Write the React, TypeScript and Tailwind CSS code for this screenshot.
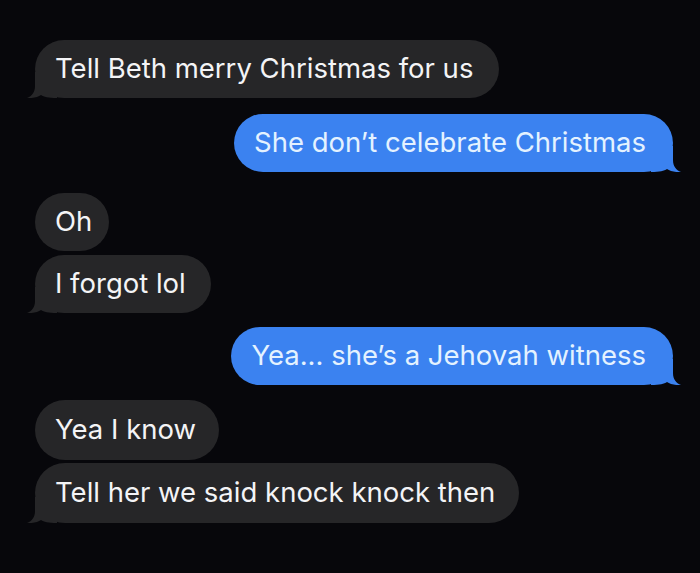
import React from "react";

const GRAY = "#262628";
const BLUE = "#3b82f0";

function Tail({ side, color }: { side: "left" | "right"; color: string }) {
  return (
    <svg
      width="30"
      height="30"
      viewBox="0 0 30 30"
      className={
        side === "left"
          ? "absolute bottom-0 left-[-8px]"
          : "absolute bottom-0 right-[-8px] -scale-x-100"
      }
    >
      <path
        d="M8 4 L8 18 C8 24 5 28 0 30 C6 30.5 11 29 14 27 C17 29 21 30 30 30 L30 4 Z"
        fill={color}
      />
    </svg>
  );
}

function Bubble({
  text,
  side,
  tail,
  className = "",
}: {
  text: string;
  side: "left" | "right";
  tail?: boolean;
  className?: string;
}) {
  const color = side === "left" ? GRAY : BLUE;
  return (
    <div
      className={`relative flex h-[58px] items-center rounded-[29px] pl-[20px] text-[27.5px] leading-none tracking-[0px] ${
        side === "left" ? "self-start text-[#f4f4f6]" : "self-end text-[#e4f2ff]"
      } ${className}`}
      style={{ backgroundColor: color }}
    >
      {tail && <Tail side={side} color={color} />}
      <span className="relative">{text}</span>
    </div>
  );
}

export default function App() {
  return (
    <div
      className="flex h-[573px] w-[700px] flex-col bg-[#07070b] pl-[35px] pr-[27px] pt-[40px]"
      style={{ fontFamily: "Inter, 'Liberation Sans', sans-serif" }}
    >
      <Bubble text="Tell Beth merry Christmas for us" side="left" tail className="pr-[26px]" />
      <Bubble text="She don’t celebrate Christmas" side="right" tail className="mt-[16px] pr-[27px]" />
      <Bubble text="Oh" side="left" className="mt-[21px] h-[56px] rounded-[28px] pr-[17px]" />
      <Bubble text="I forgot lol" side="left" tail className="mt-[4px] pr-[25px]" />
      <Bubble text="Yea... she’s a Jehovah witness" side="right" tail className="mt-[14px] pr-[27px]" />
      <Bubble text="Yea I know" side="left" className="mt-[15px] h-[60px] rounded-[30px] pr-[23px]" />
      <Bubble text="Tell her we said knock knock then" side="left" tail className="mt-[3px] h-[60px] rounded-[30px] pr-[24px]" />
    </div>
  );
}
